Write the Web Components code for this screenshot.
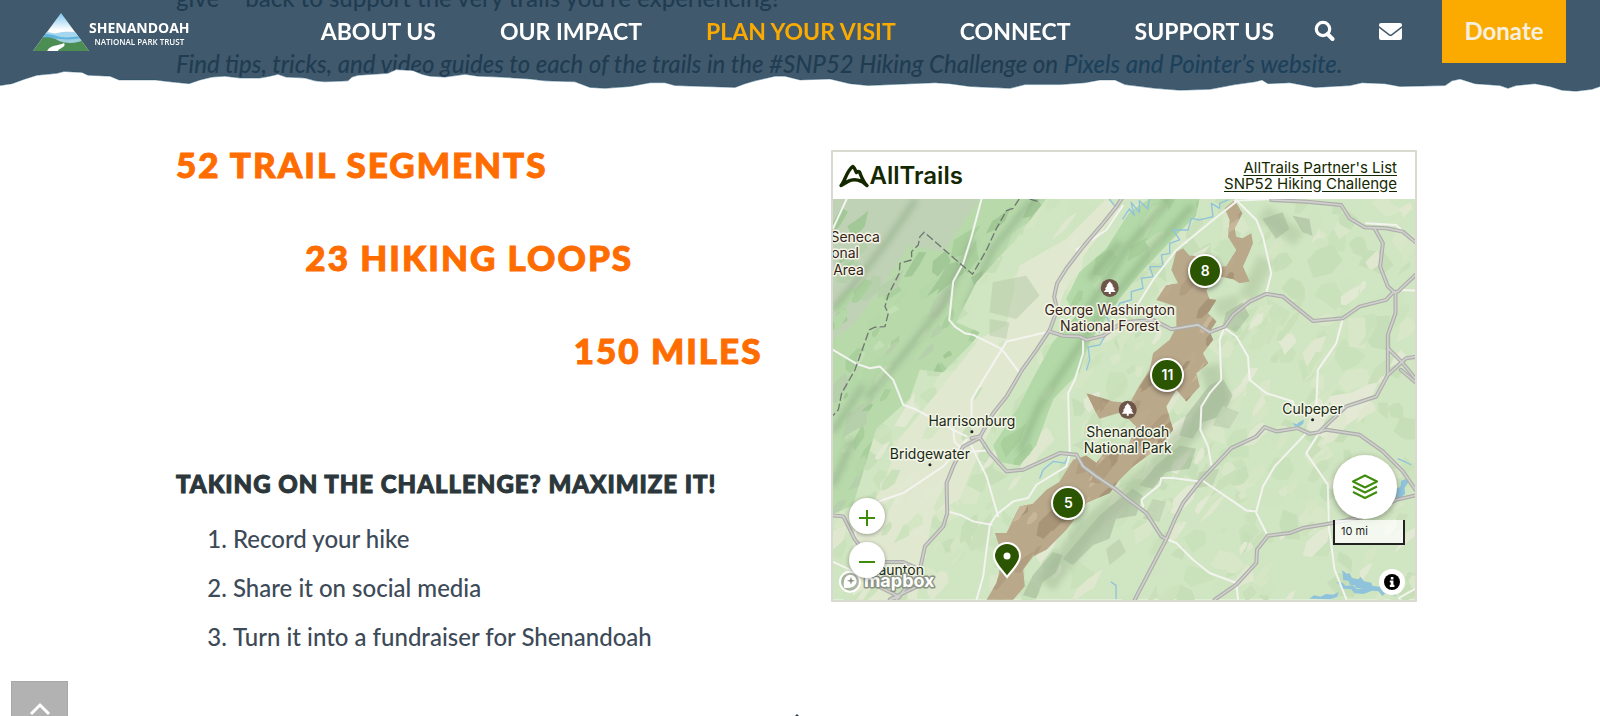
<!DOCTYPE html>
<html lang="en">
<head>
<meta charset="utf-8">
<title>SNP52 Hiking Challenge | Shenandoah National Park Trust</title>
<style>
  body {
    margin: 0;
    background: #fff;
    color: #3d4a58;
    font-family: Lato, "Open Sans", sans-serif;
    font-size: 24px;
    overflow: hidden;
  }
  a.site {
    color: #1f6592;
    text-decoration: none;
  }
</style>
</head>
<body>

<site-header>
  <nav-link href="#about">ABOUT US</nav-link>
  <nav-link href="#impact">OUR IMPACT</nav-link>
  <nav-link href="#visit" active>PLAN YOUR VISIT</nav-link>
  <nav-link href="#connect">CONNECT</nav-link>
  <nav-link href="#support">SUPPORT US</nav-link>
</site-header>

<challenge-page>
  <span slot="intro">give – back to support the very trails you’re experiencing!</span>
  <span slot="tips">Find tips, tricks, and video guides to each of the trails in the #SNP52 Hiking Challenge on <a class="site" href="#pixels">Pixels and Pointer’s website</a>.</span>
  <trail-stats slot="left"></trail-stats>
  <challenge-steps slot="left" heading="TAKING ON THE CHALLENGE? MAXIMIZE IT!"></challenge-steps>
  <trail-map slot="right"></trail-map>
</challenge-page>

<back-to-top></back-to-top>

<script>
// ---------- header ----------
class NavLink extends HTMLElement {
  constructor() {
    super();
    this.attachShadow({ mode: "open" });
    this.shadowRoot.innerHTML = `
      <style>
        :host { display: block; }
        a { color: #fff; text-decoration: none; font-size: 23px; line-height: 32px; font-weight: 700; white-space: nowrap; }
        :host([active]) a { color: #fbab00; }
      </style>
      <a href="${this.getAttribute("href")}"><slot></slot></a>`;
  }
}
customElements.define("nav-link", NavLink);

const TORN_EDGE = `0,24 12,22 25,17 37,13 57,11 64,9 82,10 88,13 110,14 119,18 155,18 170,20 189,22 200,18 212,15 225,14
  240,16 260,16 270,14 278,12 286,15 305,16 315,19 325,20 348,19 352,15 358,13 388,11 396,7 413,8 422,12 430,14 445,15 465,12
  478,14 500,15 530,17 545,19 575,20 590,26 605,27 630,25 650,21 665,21 675,24 735,26 745,22 755,19 775,14 785,14 800,18
  830,17 850,22 868,24 935,21 950,22 970,25 1010,27 1025,23 1060,23 1085,21 1100,18 1115,18 1125,23 1155,27 1180,29
  1210,28 1235,23 1255,20 1262,18 1268,22 1290,21 1315,26 1350,24 1362,21 1385,22 1400,25 1445,24 1452,19 1460,17 1475,22
  1500,24 1508,27 1516,24 1535,22 1550,25 1562,29 1576,30 1592,28 1600,25`;

const headerTemplate = document.createElement("template");
headerTemplate.innerHTML = `
  <style>
    :host { display: block; position: fixed; top: 0; left: 0; right: 0; z-index: 5; }
    .bar {
      display: flex;
      align-items: flex-start;
      height: 63px;
      padding: 0 34px 0 33px;
      background: rgba(28, 57, 80, .84);
    }
    .logo { display: flex; align-items: flex-start; padding-top: 13px; color: #fff; text-decoration: none; }
    .logo svg { width: 56px; height: 39px; }
    .name { display: flex; flex-direction: column; align-items: center; padding-top: 6px; }
    .name b { font: 700 14px/18px "Open Sans", sans-serif; }
    .name small { font: 600 8px/10px "Open Sans", sans-serif; }
    nav { display: flex; gap: 64px; margin-left: auto; padding-top: 15px; }
    .icon {
      border: 0; background: none; padding: 0; color: #fff;
      margin: 20px 0 0 40px; height: 22px;
    }
    .mail { margin-left: 44px; }
    .icon svg { display: block; }
    .donate {
      margin-left: 40px;
      width: 124px; height: 63px;
      background: #fbab00; color: #f6efdf;
      font-size: 24px; line-height: 62px; font-weight: 700;
      text-align: center; text-decoration: none;
    }
    .edge { display: block; width: 100%; height: 30px; }
  </style>
  <div class="bar">
    <a class="logo" href="#home">
      <svg viewBox="0 0 56 39">
        <defs>
          <linearGradient id="sky" x2="0" y2="1">
            <stop offset="0" stop-color="#7cc6ee"/><stop offset=".45" stop-color="#fff"/>
          </linearGradient>
          <clipPath id="peak"><path d="M28 0 56 38H0z"/></clipPath>
        </defs>
        <g clip-path="url(#peak)">
          <path fill="url(#sky)" d="M0 0h56v38H0z"/>
          <path fill="#a6d7ef" d="M8 18c6 0 10 3 16 2s12-2 22 0v12H8z"/>
          <path fill="#5fb4dd" d="M8 22c9-3 14 1 20 2s12 0 20-1v9H8z"/>
          <path fill="#9fcfe0" d="M8 26c10-3 22 3 40-1v8H8z"/>
          <path fill="#4c8d54" d="M0 29c8-6 18-6 26-1 8 3 18 3 30-3v14H0z"/>
          <path fill="#fff" d="M31 30c-5 3-16 2-17 9h11c-1-4 9-4 6-9z"/>
        </g>
      </svg>
      <span class="name"><b>SHENANDOAH</b><small>NATIONAL PARK TRUST</small></span>
    </a>
    <nav><slot></slot></nav>
    <button class="icon" aria-label="Search">
      <svg width="21" height="22" viewBox="0 0 21 22"><circle cx="9" cy="9" r="6.7" fill="none" stroke="currentColor" stroke-width="3.2"/><path d="M13.5 14l5 5" stroke="currentColor" stroke-width="4" stroke-linecap="round"/></svg>
    </button>
    <button class="icon mail" aria-label="Email">
      <svg width="23" height="22" viewBox="0 0 23 22"><path fill="currentColor" d="M2 3h19a2 2 0 0 1 2 2v1l-11 8.500h-1L0 6V5a2 2 0 0 1 2-2zM0 8l10.500 8h2L23 8v10a2 2 0 0 1-2 2H2a2 2 0 0 1-2-2z"/></svg>
    </button>
    <a class="donate" href="#donate">Donate</a>
  </div>
  <svg class="edge" viewBox="0 0 1600 32" preserveAspectRatio="none">
    <polygon fill="#1c3950" fill-opacity=".84" points="0,0 ${TORN_EDGE} 1600,0"/>
    <polygon fill="#fff" points="0,32 ${TORN_EDGE} 1600,32"/>
    <polyline fill="none" stroke="#1b4f6b" stroke-opacity=".5" points="${TORN_EDGE}"/>
  </svg>
`;

class SiteHeader extends HTMLElement {
  constructor() {
    super();
    this.attachShadow({ mode: "open" });
    this.shadowRoot.appendChild(headerTemplate.content.cloneNode(true));
  }
}
customElements.define("site-header", SiteHeader);

// ---------- page body ----------
class ChallengePage extends HTMLElement {
  constructor() {
    super();
    this.attachShadow({ mode: "open" });
    this.shadowRoot.innerHTML = `
      <style>
        :host { display: block; margin-top: -20px; }
        main { padding: 0 183px 0 176px; }
        p { margin: 0 0 30px; font-size: 24px; line-height: 36px; font-weight: 500; color: #3b4a59; white-space: nowrap; }
        .tips { font-style: italic; margin-bottom: 68px; }
        .columns { display: grid; grid-template-columns: 1fr 1fr; gap: 68px; align-items: start; }
        .next { display: flex; justify-content: center; margin-top: 59px; }
      </style>
      <main>
        <p><slot name="intro"></slot></p>
        <p class="tips"><slot name="tips"></slot></p>
        <div class="columns">
          <div><slot name="left"></slot></div>
          <div><slot name="right"></slot></div>
        </div>
        <div class="next"><svg width="12" height="12"><path fill="#333b40" d="M6 0l6 6-6 6-6-6z"/></svg></div>
      </main>`;
  }
}
customElements.define("challenge-page", ChallengePage);

class TrailStats extends HTMLElement {
  constructor() {
    super();
    this.attachShadow({ mode: "open" });
    this.shadowRoot.innerHTML = `
      <style>
        :host { display: flex; flex-direction: column; gap: 64px; }
        h2 { margin: 0; color: #ff6c00; font-size: 35px; line-height: 29px; font-weight: 900; letter-spacing: 2px; -webkit-text-stroke: 1px; }
        h2:nth-of-type(2) { text-align: center; }
        h2:nth-of-type(3) { text-align: right; }
      </style>
      <h2>52 TRAIL SEGMENTS</h2>
      <h2>23 HIKING LOOPS</h2>
      <h2>150 MILES</h2>`;
  }
}
customElements.define("trail-stats", TrailStats);

class ChallengeSteps extends HTMLElement {
  constructor() {
    super();
    this.attachShadow({ mode: "open" });
    this.shadowRoot.innerHTML = `
      <style>
        :host { display: block; margin-top: 103px; }
        h3 { margin: 0 0 21px; color: #2c373b; font-size: 24px; line-height: 32px; font-weight: 900; letter-spacing: 1px; white-space: nowrap; -webkit-text-stroke: 1px; }
        ol { margin: 0; padding: 0 0 0 57px; display: grid; gap: 13px; }
        li { font-size: 24px; line-height: 36px; font-weight: 500; }
      </style>
      <h3>${this.getAttribute("heading")}</h3>
      <ol>
        <li>Record your hike</li>
        <li>Share it on social media</li>
        <li>Turn it into a fundraiser for Shenandoah</li>
      </ol>`;
  }
}
customElements.define("challenge-steps", ChallengeSteps);

// ---------- map ----------
// terrain is drawn in a 1749 x 1203 space, three units per map pixel
const FOREST_WEST = "0,0 640,0 540,130 430,250 370,370 440,400 420,430 330,520 261,513 230,600 130,690 90,820 60,920 0,945";
const FOREST_EAST = "950,0 1100,0 1090,50 1010,130 920,225 860,300 770,430 740,520 661,600 610,740 560,800 500,790 481,740 560,620 600,540 660,430 730,350 700,300 740,220 820,150 890,40";
const VALLEY = "820,0 860,30 730,200 690,290 640,420 520,600 440,760 380,900 300,950 250,1203 60,1203 60,1010 150,860 200,720 330,560 440,420 520,380 560,200 700,120";
const PARK = "1206,3 1229,43 1206,88 1211,113 1230,118 1256,103 1261,133 1250,160 1231,203 1251,248 1221,253 1200,240 1161,233 1121,273 1130,300 1151,303 1126,343 1151,368 1131,398 1141,423 1111,463 1126,493 1091,523 1101,563 1061,608 1031,573 1001,623 1021,693 981,743 901,803 861,843 831,883 761,913 701,993 641,1053 601,1073 571,1113 576,1163 541,1203 461,1203 491,1153 511,1073 486,1003 521,1003 561,923 600,915 641,873 680,850 721,783 760,770 791,793 830,740 881,753 911,683 865,640 800,660 761,583 841,608 891,613 920,560 951,513 961,463 1011,423 1031,383 1031,323 971,303 1000,260 1036,253 1016,213 1030,160 1051,148 1070,170 1101,173 1130,205 1181,203 1211,153 1186,113 1191,63 1176,28";

const HIGHWAYS = [
  "866,0 851,23 811,73 751,143 701,208 673,253 664,293 673,333 651,393 611,453 568,513 521,593 481,643 439,718 391,743 361,803 341,853 343,943 331,983 276,1043 261,1113 191,1203",
  "416,718 439,713 471,763 521,818 571,813 681,763 731,768 751,803 791,833 851,873 881,898 941,943 986,1013 1001,1021",
  "651,398 691,411 741,413 761,423 811,411 870,370 961,363 1016,391 1096,378 1131,400 1176,383 1201,348 1251,308 1301,285 1351,293 1441,366 1531,358 1581,323 1661,303 1681,281 1696,278 1749,228",
  "1316,3 1421,8 1526,18 1551,58 1596,85 1661,88 1711,98 1749,130",
  "1626,88 1651,133 1643,203 1666,263 1689,283 1689,343 1666,408 1666,528 1631,593 1541,623 1461,698 1481,693 1581,708 1651,758 1711,818 1749,873",
  "1666,448 1711,493 1749,540", "1666,528 1721,478 1749,474", "1705,513 1749,550",
  "906,1203 1001,1021 1026,963 1051,913 1106,843 1196,748 1271,713 1296,685 1331,698 1396,688 1431,705 1461,700",
  "1146,1203 1211,1158 1271,1093 1273,1053 1306,1011 1371,1003 1411,988 1501,973 1601,953 1691,903 1749,890",
  "0,950 31,953 66,1023 91,1053 131,1090 211,1090 261,1113", "110,1150 200,1195 170,1203 260,1160"
];
const ROADS = [
  "41,0 0,88", "446,0 416,113 391,193 361,248 349,363 366,383 396,403 421,408 506,450 561,523",
  "651,398 521,428 506,453 451,543 416,603 416,663", "0,453 71,495 111,508 141,503 181,543 211,618 251,633 361,693 401,713",
  "870,20 821,93 731,153", "751,423 751,463 726,543 706,583 711,763 701,803 611,858 586,898 541,908 491,948 471,978 461,1053 451,1133 431,1203",
  "411,733 461,833 496,953", "343,938 381,948 421,968 476,978", "401,723 331,803 211,883 151,903 71,943 66,1023", "0,1090 51,1113", "361,690 365,730 400,760 460,755",
  "1211,8 1141,63 1031,153 961,243 911,323", "1211,3 1271,63 1291,113 1316,223 1301,283", "1206,5 1316,0",
  "1176,383 1161,423 1166,543 1131,583 1106,623 1103,693 1126,743 1136,798", "1176,388 1211,413 1246,473 1251,543 1301,583 1381,608 1390,650",
  "1531,358 1511,433 1456,513 1450,643", "1106,843 1241,935 1271,938 1291,863 1326,803 1421,703", "1271,943 1301,1003",
  "1461,700 1421,763 1486,858 1489,983 1506,1113 1541,1201", "931,923 926,903 981,858 986,838 1021,838 1101,848",
  "1001,1021 1031,1033 1081,1083 1131,1123 1211,1153 1216,1201", "1601,73 1691,78 1747,133", "1696,273 1747,275", "1700,1198 1749,1170"
];
const RIVERS = [
  "1186,3 1161,13 1161,28 1136,13 1141,53 1101,63 1076,58 1066,93 1021,93 1041,123 1011,133 1011,163 986,168 991,203 951,203 961,233 926,238 931,268 896,278 896,303 861,313 850,340 810,330 830,370 800,400",
  "870,60 890,30 905,50 895,10 920,40 920,5 945,30 950,0", "816,413 801,438 766,445 771,483 761,513", "830,0 845,20",
  "706,773 696,793 661,788 631,813 621,838", "1530,1118 1560,1145 1620,1165 1680,1175",
  "1697,780 1720,790 1735,798", "835,1150 850,1160 850,1200"
];
const LAKES = "M1380 672l12 4 8-6 14-8-2 12-10 8-14 2zM1530 1118l14 8 6-4 8 16 20 4 6-8 10 14 22 4 4 10 20 2 16-6 4 10 22 12 10 14-16-8-18-2-8 8-12-14-20-2-14 6-10-12-22-2-6-8-14-2-4-12-16-2zM1510 1150l20 2 10 10 20-2 14 12 24-4 16 10-22 8-26-2-10-12-24-2-10-12zM1430 1200l14-10 20 4 16-8 22 2 16-8-4 14-20 8zM1690 900l2-30 12-6 2-18 16-6 6 10-12 18 2 16-14 14z";

// small seeded generator, so that the relief is the same on each load
let seed = 52;
const rand = () => (seed = (seed * 16807) % 2147483647) / 2147483647;

const relief = (count, colors, size, slant) => {
  let out = "";
  for (let i = 0; i < count; i++) {
    const x = rand() * 1749, y = rand() * 1203;
    const s = size * (0.4 + rand());
    let d = "";
    for (let a = 0; a < 6; a++) {
      const t = a * Math.PI / 3, r = s * (0.3 + rand() * 0.9);
      const py = Math.sin(t) * r * (slant ? 1.8 : 1);
      const px = Math.cos(t) * r - (slant ? py * 0.6 : 0);
      d += `${Math.round(x + px)},${Math.round(y + py)} `;
    }
    out += `<polygon points="${d}" fill="${colors[Math.floor(rand() * colors.length)]}"/>`;
  }
  return out;
};
const lines = (list, color, width) =>
  list.map(p => `<polyline points="${p}" stroke="${color}" stroke-width="${width}"/>`).join("");

const treeIcon = (x, y) => `
  <g transform="translate(${x} ${y})">
    <circle r="9" fill="#6d5549"/>
    <path fill="#fff" d="M0-6.500 3.500-2.500H2.300L5 .8H3.500L6 4H1V6H-1V4H-6L-3.500 .8H-5L-2.300-2.500H-3.500z"/>
  </g>`;

const mapTemplate = document.createElement("template");
mapTemplate.innerHTML = `
  <style>
    :host { display: block; border: 2px solid #d9d9cf; font-family: Inter, sans-serif; color: #142800; }
    header { display: flex; justify-content: space-between; align-items: center; height: 47px; padding: 0 18px 0 6px; background: #fff; }
    .brand { display: flex; align-items: center; gap: 1px; font-size: 24px; line-height: 28px; font-weight: 600; color: #142800; text-decoration: none; }
    .list { font-size: 15px; line-height: 16px; text-align: right; color: #142800; text-underline-offset: 2px; }
    .map { position: relative; aspect-ratio: 583 / 401; overflow: hidden; }
    .map > svg { display: block; width: 100%; height: 100%; }
    text { font-size: 14px; font-weight: 400; fill: #1c2a12; stroke: #f2f5e8; stroke-width: 3px; stroke-linejoin: round; paint-order: stroke; text-anchor: middle; }
    .park text { fill: #3a1f16; }
    text.end { text-anchor: end; }
    text.mapbox { font-size: 18px; font-weight: 700; fill: #fff; stroke: #8c9585; text-anchor: start; }
    button { position: absolute; transform: translate(-50%, -50%); padding: 0; border: 0; border-radius: 50%; background: #fff; }
    button svg { display: block; margin: auto; }
    .cluster {
      width: 34px; height: 34px; border: 2px solid #fff; background: #2b5500; color: #fff;
      font: 600 14px/30px Inter, sans-serif; box-shadow: 0 2px 5px rgba(0, 0, 0, .4);
    }
    .zoom { width: 36px; height: 36px; box-shadow: 0 1px 4px rgba(0, 0, 0, .35); }
    .layers { width: 64px; height: 64px; box-shadow: 0 2px 6px rgba(0, 0, 0, .35); }
    .info { width: 26px; height: 26px; }
    .pin { background: none; border-radius: 0; }
    .scale {
      position: absolute; right: 10px; bottom: 55px; width: 72px; height: 25px; box-sizing: border-box;
      border: 2px solid #222; border-top: 0; padding-left: 6px; background: rgba(255, 255, 255, .75);
      font-size: 11px; line-height: 22px; color: #222;
    }
  </style>
  <header>
    <a class="brand" href="#alltrails">
      <svg width="30" height="24" viewBox="0 0 88 70"><path fill="none" stroke="#142800" stroke-width="10" stroke-linejoin="round" stroke-linecap="round" d="M6 63C18 50 22 20 41 7c6 5 7 12 10 18 3-3 6-4 9-2 6 14 10 28 22 40C66 46 44 42 28 50 19 54 13 60 6 63z"/></svg>
      AllTrails
    </a>
    <a class="list" href="#snp52">AllTrails Partner's List<br>SNP52 Hiking Challenge</a>
  </header>
  <div class="map">
    <svg viewBox="0 0 583 401" preserveAspectRatio="xMidYMid slice">
      <defs>
        <clipPath id="west"><polygon points="${FOREST_WEST}"/></clipPath>
        <clipPath id="east"><polygon points="${FOREST_EAST}"/></clipPath>
        <clipPath id="park"><polygon points="${PARK}"/></clipPath>
        <filter id="soft"><feGaussianBlur stdDeviation="10"/></filter>
      </defs>
      <g transform="scale(.33333)">
        <rect width="1749" height="1203" fill="#d0e5c1"/>
        ${relief(330, ["#cae2bb", "#d9e7c9", "#cfe5c1", "#c7dfb9"], 42, false)}
        <polygon points="${VALLEY}" fill="#e1e8d0"/>
        <polygon points="1560,580 1450,600 1420,690 1480,720 1600,640 1640,540" fill="#e4e9d5"/>
        ${relief(260, ["#d5e6c5", "#dfe8cf", "#e2e9d3", "#cde3be", "#c9e0bb"], 24, true)}
        <g filter="url(#soft)" opacity=".4">
          <path d="M1130 500 1160 600 1050 720 960 820 760 990 640 1160" fill="none" stroke="#97b08b" stroke-width="60"/>
          <path d="M1290 40 1400 120M1300 180 1240 300M1150 330 1220 310" fill="none" stroke="#a3bb95" stroke-width="50"/>
        </g>
        <g opacity=".5">
          <path fill="#9fb494" d="M1130 560l40-20 30 50-30 60-60 20-30 50-40-10 20-60zM1040 740l50 10-20 60-70 10-40 50-40-10 50-60zM900 870l30 20-20 60-60 10-20 60-50 20-60 60-30-20 60-70 50-60zM660 1060l30 10-20 50-40 30-20 50-40-10 30-60zM1180 340l50-30 20 40-40 50-40-20zM1290 60l60-20 20 50-40 30zM1380 50l50 10 10 50-30-10z"/>
          <path fill="#b5c9a8" d="M1170 620l50 20-30 50-50-10zM1100 820l60-10-20 50-60 10zM960 900l40 10-20 60-50-10zM820 1050l40-30 20 40-50 40zM480 250l100-20 40 60-70 70-80-20zM470 360l60 10-10 50-50-10z"/>
        </g>
        <polygon points="${FOREST_WEST}" fill="#b8daab"/>
        <g clip-path="url(#west)">
          <polygon points="0,0 440,0 330,160 230,140 150,260 60,380 0,420" fill="#c0d2b6"/>
          ${relief(420, ["#a9cf9c", "#b5d8a8", "#c3dfb4", "#a3c897", "#b7d0ac"], 26, true)}
          <g fill="none" stroke="#90ad88" stroke-width="14" filter="url(#soft)" opacity=".8">
            <path d="M250 0 160 130 60 260 0 330M600 0 480 150 400 330M420 120 330 320 210 470 100 600M60 720 0 860M90 560 0 700"/>
          </g>
        </g>
        <polygon points="${FOREST_EAST}" fill="#b3d9a8"/>
        <g clip-path="url(#east)">
          ${relief(300, ["#a8cf9c", "#bfdeb1", "#b4d8a7"], 25, true)}
          <g fill="none" stroke="#8eb083" stroke-width="16" filter="url(#soft)" opacity=".8">
            <path d="M1010 0 880 150 760 340M1080 20 960 150 820 320 720 470 620 620 560 760M860 130 770 240"/>
          </g>
        </g>
        <polygon points="${PARK}" fill="#baa88b"/>
        <g clip-path="url(#park)">${relief(600, ["#b19e80", "#c7b699", "#bbaa8c", "#a89578"], 24, true)}</g>
        <g fill="none" stroke-linejoin="round" stroke-linecap="round">
          ${lines(RIVERS, "#8fc3dc", 4)}
          <path d="${LAKES}" fill="#8fc3dc"/>
          ${lines(ROADS, "#f3f4ef", 6)}
          ${lines(HIGHWAYS, "#adadab", 12)}
          ${lines(HIGHWAYS, "#d0d0cc", 5)}
          <path stroke="#6f7770" stroke-width="4" stroke-linecap="butt" stroke-dasharray="24 9" d="M559 0 541 28 521 35 491 88 461 153 419 226 274 100 261 113 256 138 236 158 236 183 201 193 199 223 166 288 156 323 166 343 156 383 126 385 109 393 66 513 26 583 16 633 0 650M591 0 616 8"/>
        </g>
      </g>
      <g fill="#222"><circle cx="139" cy="233" r="1.500"/><circle cx="97" cy="266" r="1.500"/><circle cx="480" cy="221" r="1.500"/></g>
      <text x="139" y="227">Harrisonburg</text>
      <text x="97" y="260">Bridgewater</text>
      <text x="480" y="215">Culpeper</text>
      <text x="91" y="376" class="end">Staunton</text>
      ${treeIcon(277, 89)}${treeIcon(295, 211)}
      <g class="park">
        <text x="47" y="43" class="end">Seneca</text>
        <text x="26" y="59" class="end">onal</text>
        <text x="31" y="76" class="end">Area</text>
        <text x="277" y="116">George Washington</text>
        <text x="277" y="132">National Forest</text>
      </g>
      <text x="295" y="238">Shenandoah</text>
      <text x="295" y="254">National Park</text>
      <circle cx="17" cy="383" r="10" fill="#8c9585" fill-opacity=".6" stroke="#fff" stroke-width="2"/>
      <path fill="#fff" d="M11 389c-1-8 1-12 6-13 5 0 8 5 6 9s-7 5-12 4z"/><path fill="#8c9585" d="M18 378l1 3 3 1-3 1-1 3-1-3-3-1 3-1z"/>
      <text x="31" y="388" class="mapbox">mapbox</text>
    </svg>
    <button class="cluster" style="left:64%;top:18%">8</button>
    <button class="cluster" style="left:57.500%;top:44%">11</button>
    <button class="cluster" style="left:40.500%;top:76%">5</button>
    <button class="pin" aria-label="Trail" style="left:30%;top:90%">
      <svg width="30" height="38" viewBox="0 0 30 38"><path fill="#2b5500" stroke="#fff" stroke-width="2" d="M15 36C9 28 2 22 2 15a13 13 0 0 1 26 0c0 7-7 13-13 21z"/><circle cx="15" cy="15" r="3.500" fill="#fff"/></svg>
    </button>
    <button class="zoom" aria-label="Zoom in" style="left:6%;top:79%"><svg width="16" height="20"><path d="M0 12h16M8 4v16" stroke="#3f8c0a" stroke-width="2"/></svg></button>
    <button class="zoom" aria-label="Zoom out" style="left:6%;top:90%"><svg width="16" height="20"><path d="M0 12h16" stroke="#3f8c0a" stroke-width="2"/></svg></button>
    <button class="layers" aria-label="Map layers" style="left:91.500%;top:72%">
      <svg width="26" height="26" viewBox="0 0 26 26" fill="none" stroke="#3f8c0a" stroke-width="2" stroke-linejoin="round"><path d="M13 1.500 25 7.500 13 13.500 1 7.500zM1 12.500l12 6 12-6M1 18l12 6 12-6"/></svg>
    </button>
    <div class="scale">10 mi</div>
    <button class="info" aria-label="Attribution" style="left:96%;top:95.500%">
      <svg width="16" height="16"><circle cx="8" cy="8" r="8"/><path fill="#fff" d="M6.800 3h2.600v2.400H6.800zM5.800 6.500h3.600v4.300h1V13H5.800v-2.200h1V8.500h-1z"/></svg>
    </button>
  </div>
`;

class TrailMap extends HTMLElement {
  constructor() {
    super();
    this.attachShadow({ mode: "open" });
    this.shadowRoot.appendChild(mapTemplate.content.cloneNode(true));
  }
}
customElements.define("trail-map", TrailMap);

// ---------- back to top ----------
class BackToTop extends HTMLElement {
  constructor() {
    super();
    this.attachShadow({ mode: "open" });
    this.shadowRoot.innerHTML = `
      <style>
        :host { display: block; position: fixed; left: 11px; bottom: -22px; }
        button { display: block; width: 57px; height: 57px; padding: 0; border: 1px solid #a8a8a8; background: #b2b2b2; }
        svg { display: block; margin: auto; }
      </style>
      <button aria-label="Back to top">
        <svg width="24" height="16"><path d="M3 12l9-9 9 9" fill="none" stroke="#fff" stroke-width="3"/></svg>
      </button>`;
    this.shadowRoot.querySelector("button").addEventListener("click", () => window.scrollTo(0, 0));
  }
}
customElements.define("back-to-top", BackToTop);
</script>
</body>
</html>
